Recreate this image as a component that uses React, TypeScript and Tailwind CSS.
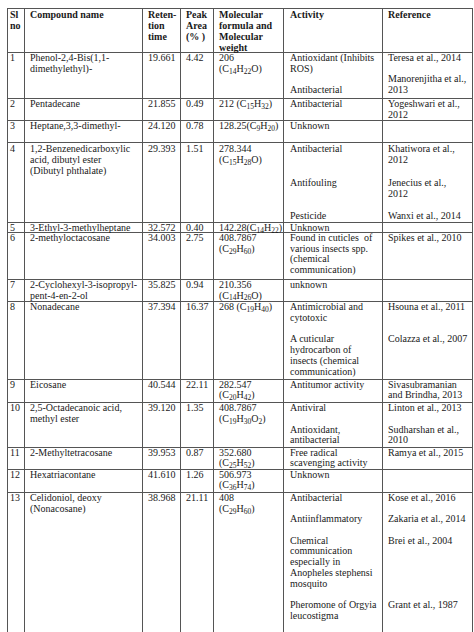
import React from "react";

type Cell = React.ReactNode[];

interface Row {
  no: string;
  h: string;
  lh: string;
  name: Cell;
  rt: string;
  area: string;
  formula: Cell;
  activity: Cell;
  refs: Cell;
}

// chemical formula like (C14H22O)
const F = ({ c, h, o }: { c: string; h: string; o?: string }) => (
  <>
    (C<sub>{c}</sub>H<sub>{h}</sub>
    {o})
  </>
);

const rows: Row[] = [
  {
    no: "1",
    h: "h-[45px]",
    lh: "h-[10.7px] leading-[10.7px]",
    name: ["Phenol-2,4-Bis(1,1-", "dimethylethyl)-"],
    rt: "19.661",
    area: "4.42",
    formula: ["206", <F c="14" h="22" o="O" />],
    activity: ["Antioxidant (Inhibits", "ROS)", "", "Antibacterial"],
    refs: ["Teresa et al., 2014", "", "Manorenjitha et al.,", "2013"],
  },
  {
    no: "2",
    h: "h-[21px]",
    lh: "h-[10.5px] leading-[10.5px]",
    name: ["Pentadecane"],
    rt: "21.855",
    area: "0.49",
    formula: [<>212 <F c="15" h="32" /></>],
    activity: ["Antibacterial"],
    refs: ["Yogeshwari et al.,", "2012"],
  },
  {
    no: "3",
    h: "h-[21px]",
    lh: "h-[10.5px] leading-[10.5px]",
    name: ["Heptane,3,3-dimethyl-"],
    rt: "24.120",
    area: "0.78",
    formula: [<>128.25<F c="9" h="20" /></>],
    activity: ["Unknown"],
    refs: [],
  },
  {
    no: "4",
    h: "h-[79px]",
    lh: "h-[11.2px] leading-[11.2px]",
    name: ["1,2-Benzenedicarboxylic", "acid, dibutyl ester", "(Dibutyl phthalate)"],
    rt: "29.393",
    area: "1.51",
    formula: ["278.344", <F c="15" h="28" o="O" />],
    activity: ["Antibacterial", "", "", "Antifouling", "", "", "Pesticide"],
    refs: ["Khatiwora et al.,", "2012", "", "Jenecius et al.,", "2012", "", "Wanxi et al., 2014"],
  },
  {
    no: "5",
    h: "h-[9px]",
    lh: "h-[9px] leading-[9px]",
    name: ["3-Ethyl-3-methylheptane"],
    rt: "32.572",
    area: "0.40",
    formula: [<>142.28<F c="14" h="22" /></>],
    activity: ["Unknown"],
    refs: [],
  },
  {
    no: "6",
    h: "h-[46px]",
    lh: "h-[10.7px] leading-[10.7px]",
    name: ["2-methyloctacosane"],
    rt: "34.003",
    area: "2.75",
    formula: ["408.7867", <F c="29" h="60" />],
    activity: ["Found in cuticles  of", "various insects spp.", "(chemical", "communication)"],
    refs: ["Spikes et al., 2010"],
  },
  {
    no: "7",
    h: "h-[21px]",
    lh: "h-[10.5px] leading-[10.5px]",
    name: ["2-Cyclohexyl-3-isopropyl-", "pent-4-en-2-ol"],
    rt: "35.825",
    area: "0.94",
    formula: ["210.356", <F c="14" h="26" o="O" />],
    activity: ["unknown"],
    refs: [],
  },
  {
    no: "8",
    h: "h-[77px]",
    lh: "h-[10.8px] leading-[10.8px]",
    name: ["Nonadecane"],
    rt: "37.394",
    area: "16.37",
    formula: [<>268 <F c="19" h="40" /></>],
    activity: [
      "Antimicrobial and",
      "cytotoxic",
      "",
      "A cuticular",
      "hydrocarbon of",
      "insects (chemical",
      "communication)",
    ],
    refs: ["Hsouna et al., 2011", "", "", "Colazza et al., 2007"],
  },
  {
    no: "9",
    h: "h-[22px]",
    lh: "h-[10px] leading-[10px]",
    name: ["Eicosane"],
    rt: "40.544",
    area: "22.11",
    formula: ["282.547", <F c="20" h="42" />],
    activity: ["Antitumor activity"],
    refs: ["Sivasubramanian", "and Brindha, 2013"],
  },
  {
    no: "10",
    h: "h-[44px]",
    lh: "h-[10.8px] leading-[10.8px]",
    name: ["2,5-Octadecanoic acid,", "methyl ester"],
    rt: "39.120",
    area: "1.35",
    formula: [
      "408.7867",
      <>
        (C<sub>19</sub>H<sub>30</sub>O<sub>2</sub>)
      </>,
    ],
    activity: ["Antiviral", "", "Antioxidant,", "antibacterial"],
    refs: ["Linton et al., 2013", "", "Sudharshan et al.,", "2010"],
  },
  {
    no: "11",
    h: "h-[21px]",
    lh: "h-[10px] leading-[10px]",
    name: ["2-Methyltetracosane"],
    rt: "39.953",
    area: "0.87",
    formula: ["352.680", <F c="25" h="52" />],
    activity: ["Free radical", "scavenging activity"],
    refs: ["Ramya et al., 2015"],
  },
  {
    no: "12",
    h: "h-[22px]",
    lh: "h-[10px] leading-[10px]",
    name: ["Hexatriacontane"],
    rt: "41.610",
    area: "1.26",
    formula: ["506.973", <F c="36" h="74" />],
    activity: ["Unknown"],
    refs: [],
  },
  {
    no: "13",
    h: "h-[160px]",
    lh: "h-[10.7px] leading-[10.7px]",
    name: ["Celidoniol, deoxy", "(Nonacosane)"],
    rt: "38.968",
    area: "21.11",
    formula: ["408", <F c="29" h="60" />],
    activity: [
      "Antibacterial",
      "",
      "Antiinflammatory",
      "",
      "Chemical",
      "communication",
      "especially in",
      "Anopheles stephensi",
      "mosquito",
      "",
      "Pheromone of Orgyia",
      "leucostigma",
    ],
    refs: [
      "Kose et al., 2016",
      "",
      "Zakaria et al., 2014",
      "",
      "Brei et al., 2004",
      "",
      "",
      "",
      "",
      "",
      "Grant et al., 1987",
    ],
  },
];

const Lines = ({ lines, lh = "h-[11px] leading-[11px]" }: { lines: Cell; lh?: string }) => (
  <>
    {lines.map((l, i) => (
      <div key={i} className={`whitespace-pre ${lh}`}>
        {l === "" ? "\u00a0" : l}
      </div>
    ))}
  </>
);

const td = "border border-[#555] p-0 align-top";
const th = "border border-[#555] p-0 align-top text-left font-bold";

export default function App() {
  return (
    <div className="bg-white min-h-screen pt-[8px] pl-[7px] text-[10px] leading-[11px] text-[#1a1a1a] font-['Liberation_Serif','Times_New_Roman',serif]">
      <table className="border-collapse table-fixed w-[465px]">
        <colgroup>
          <col className="w-[17px]" />
          <col className="w-[118px]" />
          <col className="w-[38px]" />
          <col className="w-[33px]" />
          <col className="w-[70px]" />
          <col className="w-[99px]" />
          <col className="w-[90px]" />
        </colgroup>
        <thead>
          <tr>
            <th className={th}>
              <div className="h-[43px] pl-[2px]">
                <Lines lines={["Sl", "no"]} />
              </div>
            </th>
            <th className={th}>
              <div className="h-[43px] pl-[5px]">
                <Lines lines={["Compound name"]} />
              </div>
            </th>
            <th className={th}>
              <div className="h-[43px] pl-[5px]">
                <Lines lines={["Reten-", "tion", "time"]} />
              </div>
            </th>
            <th className={th}>
              <div className="h-[43px] pl-[5px]">
                <Lines lines={["Peak", "Area", "(% )"]} />
              </div>
            </th>
            <th className={th}>
              <div className="h-[43px] pl-[5px]">
                <Lines lines={["Molecular", "formula and", "Molecular", "weight"]} />
              </div>
            </th>
            <th className={th}>
              <div className="h-[43px] pl-[6px]">
                <Lines lines={["Activity"]} />
              </div>
            </th>
            <th className={th}>
              <div className="h-[43px] pl-[5px]">
                <Lines lines={["Reference"]} />
              </div>
            </th>
          </tr>
        </thead>
        <tbody>
          {rows.map((r) => (
            <tr key={r.no}>
              <td className={td}>
                <div className={`${r.h} pl-[2px]`}>
                  <Lines lines={[r.no]} lh={r.lh} />
                </div>
              </td>
              <td className={td}>
                <div className={`${r.h} pl-[5px]`}>
                  <Lines lines={r.name} lh={r.lh} />
                </div>
              </td>
              <td className={td}>
                <div className={`${r.h} pl-[5px]`}>
                  <Lines lines={[r.rt]} lh={r.lh} />
                </div>
              </td>
              <td className={td}>
                <div className={`${r.h} pl-[5px]`}>
                  <Lines lines={[r.area]} lh={r.lh} />
                </div>
              </td>
              <td className={td}>
                <div className={`${r.h} pl-[5px]`}>
                  <Lines lines={r.formula} lh={r.lh} />
                </div>
              </td>
              <td className={td}>
                <div className={`${r.h} pl-[6px]`}>
                  <Lines lines={r.activity} lh={r.lh} />
                </div>
              </td>
              <td className={td}>
                <div className={`${r.h} pl-[5px]`}>
                  <Lines lines={r.refs} lh={r.lh} />
                </div>
              </td>
            </tr>
          ))}
        </tbody>
      </table>
    </div>
  );
}
